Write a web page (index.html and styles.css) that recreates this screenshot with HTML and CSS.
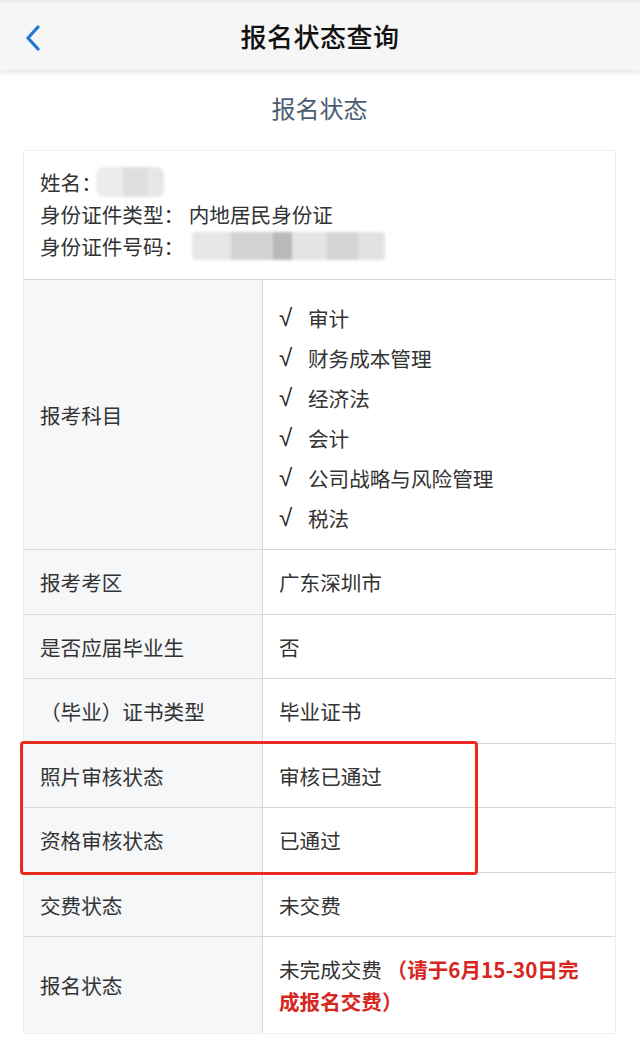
FILE: index.html
```html
<!DOCTYPE html>
<html lang="zh-CN">
<head>
    <meta charset="UTF-8">
    <meta name="viewport" content="width=device-width, initial-scale=1.0">
    <title>报名状态查询</title>
    <link rel="stylesheet" href="styles.css">
</head>
<body>

<div class="topbar">
    <span class="back">
        <svg width="16" height="26" viewBox="0 0 16 26"><path d="M13 2 L3 13 L13 24" fill="none" stroke="#1f78d1" stroke-width="3.2" stroke-linecap="round" stroke-linejoin="round"/></svg>
    </span>
    <div class="topbar-title">报名状态查询</div>
</div>

<div class="page">
    <h2 class="subtitle">报名状态</h2>

    <div class="panel">
        <div class="info">
            <div class="info-line">姓名：<span class="blur blur-name"></span></div>
            <div class="info-line">身份证件类型：&nbsp;内地居民身份证</div>
            <div class="info-line">身份证件号码：<span class="blur blur-id"></span></div>
        </div>

        <table class="status">
            <tr>
                <td class="label">报考科目</td>
                <td class="value subjects">
                    <div class="subject"><span class="tick">√</span>审计</div>
                    <div class="subject"><span class="tick">√</span>财务成本管理</div>
                    <div class="subject"><span class="tick">√</span>经济法</div>
                    <div class="subject"><span class="tick">√</span>会计</div>
                    <div class="subject"><span class="tick">√</span>公司战略与风险管理</div>
                    <div class="subject"><span class="tick">√</span>税法</div>
                </td>
            </tr>
            <tr>
                <td class="label">报考考区</td>
                <td class="value">广东深圳市</td>
            </tr>
            <tr>
                <td class="label">是否应届毕业生</td>
                <td class="value">否</td>
            </tr>
            <tr>
                <td class="label">（毕业）证书类型</td>
                <td class="value">毕业证书</td>
            </tr>
            <tr>
                <td class="label">照片审核状态</td>
                <td class="value">审核已通过</td>
            </tr>
            <tr>
                <td class="label">资格审核状态</td>
                <td class="value">已通过</td>
            </tr>
            <tr>
                <td class="label">交费状态</td>
                <td class="value">未交费</td>
            </tr>
            <tr>
                <td class="label">报名状态</td>
                <td class="value">未完成交费 <span class="warn">（请于6月15-30日完成报名交费）</span></td>
            </tr>
        </table>

        <div class="highlight"></div>
    </div>
</div>

</body>
</html>
```

FILE: styles.css
```css
body {
    margin: 0;
    font-family: 'Noto Sans CJK SC', 'Noto Sans', sans-serif;
    color: #333;
    background-color: #fff;
}

.topbar {
    position: relative;
    height: 70px;
    display: flex;
    align-items: center;
    justify-content: center;
    background-color: #f6f6f6;
    border-top: 3px solid #ececec;
    box-sizing: border-box;
    box-shadow: 0 2px 6px rgba(0, 0, 0, 0.12);
}

.back {
    position: absolute;
    left: 25px;
    top: 22px;
    display: flex;
}

.topbar-title {
    font-size: 26px;
    font-weight: 500;
    color: #111;
    letter-spacing: 0.5px;
    margin-top: -3px;
}

.page {
    padding: 0 24px 20px 23px;
}

.subtitle {
    margin: 0;
    padding: 20px 0 24px;
    text-align: center;
    font-size: 24px;
    font-weight: 400;
    line-height: 36px;
    color: #4b5d73;
}

.panel {
    position: relative;
    border: 1px solid #efefef;
}

.info {
    padding: 15px 16px 17px;
    font-size: 20.6px;
    line-height: 32px;
    border-bottom: 1px solid #d8d8d8;
}

.info-line {
    display: flex;
    align-items: center;
}

.blur {
    display: inline-block;
    height: 30px;
    border-radius: 8px;
    filter: blur(1.5px);
}

.blur-name {
    width: 68px;
    margin-left: -6px;
    background: linear-gradient(90deg, #ececec 0 40%, #dedede 40% 75%, #e6e6e6 75%);
}

.blur-id {
    width: 193px;
    height: 28px;
    margin-left: 8px;
    border-radius: 4px;
    background: linear-gradient(90deg, #e6e6e6 0 20%, #d2d2d2 20% 42%, #b9b9b9 42% 52%, #e4e4e4 52% 70%, #d4d4d4 70% 86%, #e2e2e2 86%);
}

.status {
    width: 100%;
    border-collapse: collapse;
    font-size: 20.6px;
    line-height: 32px;
}

.status td {
    padding: 16px 16px 15.5px;
    border-top: 1px solid #d8d8d8;
    vertical-align: middle;
}

.status tr:first-child td {
    border-top: none;
}

.label {
    width: 206px;
    background-color: #f5f7f9;
    border-right: 1px solid #d8d8d8;
    color: #333;
}

.value {
    padding-right: 20px !important;
    color: #333;
}

.subjects {
    padding-top: 18px !important;
    padding-bottom: 11px !important;
}

.subject {
    display: flex;
    align-items: center;
    height: 40px;
    line-height: 40px;
}

.tick {
    display: inline-block;
    width: 29px;
    height: 40px;
    font-family: 'Liberation Sans', sans-serif;
    font-size: 24px;
    line-height: 40px;
    color: #222;
}

.warn {
    color: #d7261e;
    font-weight: 700;
}

.highlight {
    position: absolute;
    left: -4px;
    top: 590px;
    width: 452px;
    height: 128px;
    border: 3.5px solid #ea2b22;
    border-radius: 4px;
}
```
